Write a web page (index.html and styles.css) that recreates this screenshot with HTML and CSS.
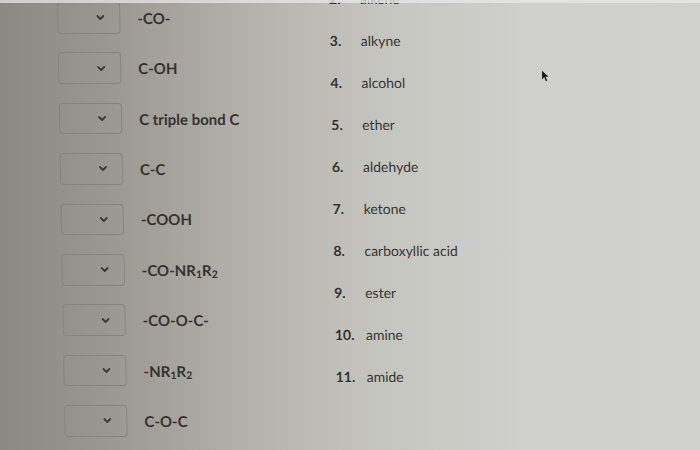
FILE: index.html
```html
<!DOCTYPE html>
<html lang="en">
<head>
<meta charset="utf-8">
<title>Functional groups</title>
<link rel="stylesheet" href="styles.css">
</head>
<body>
<div class="screen">
  <div class="sheet">
    <ul class="groups">
      <li class="group"><span class="select"><svg class="chev" viewBox="0 0 8 5"><polyline points="1,1 4,4 7,1"/></svg></span><span class="formula">-CO-</span></li>
      <li class="group"><span class="select"><svg class="chev" viewBox="0 0 8 5"><polyline points="1,1 4,4 7,1"/></svg></span><span class="formula">C-OH</span></li>
      <li class="group"><span class="select"><svg class="chev" viewBox="0 0 8 5"><polyline points="1,1 4,4 7,1"/></svg></span><span class="formula">C triple bond C</span></li>
      <li class="group"><span class="select"><svg class="chev" viewBox="0 0 8 5"><polyline points="1,1 4,4 7,1"/></svg></span><span class="formula">C-C</span></li>
      <li class="group"><span class="select"><svg class="chev" viewBox="0 0 8 5"><polyline points="1,1 4,4 7,1"/></svg></span><span class="formula">-COOH</span></li>
      <li class="group"><span class="select"><svg class="chev" viewBox="0 0 8 5"><polyline points="1,1 4,4 7,1"/></svg></span><span class="formula">-CO-NR<sub>1</sub>R<sub>2</sub></span></li>
      <li class="group"><span class="select"><svg class="chev" viewBox="0 0 8 5"><polyline points="1,1 4,4 7,1"/></svg></span><span class="formula">-CO-O-C-</span></li>
      <li class="group"><span class="select"><svg class="chev" viewBox="0 0 8 5"><polyline points="1,1 4,4 7,1"/></svg></span><span class="formula">-NR<sub>1</sub>R<sub>2</sub></span></li>
      <li class="group"><span class="select"><svg class="chev" viewBox="0 0 8 5"><polyline points="1,1 4,4 7,1"/></svg></span><span class="formula">C-O-C</span></li>
    </ul>
    <ol class="names">
      <li class="name"><span class="num">2.</span><span class="label">alkene</span></li>
      <li class="name"><span class="num">3.</span><span class="label">alkyne</span></li>
      <li class="name"><span class="num">4.</span><span class="label">alcohol</span></li>
      <li class="name"><span class="num">5.</span><span class="label">ether</span></li>
      <li class="name"><span class="num">6.</span><span class="label">aldehyde</span></li>
      <li class="name"><span class="num">7.</span><span class="label">ketone</span></li>
      <li class="name"><span class="num">8.</span><span class="label">carboxyllic acid</span></li>
      <li class="name"><span class="num">9.</span><span class="label">ester</span></li>
      <li class="name"><span class="num">10.</span><span class="label">amine</span></li>
      <li class="name"><span class="num">11.</span><span class="label">amide</span></li>
    </ol>
  </div>
  <svg class="cursor" viewBox="0 0 10 14"><path d="M1 1 L1 11 L3.5 8.5 L5.5 13 L7 12.3 L5 8 L8.5 8 Z"/></svg>
</div>
</body>
</html>
```

FILE: styles.css
```css
html, body {
  margin: 0;
  padding: 0;
}

body {
  width: 700px;
  height: 450px;
  overflow: hidden;
  font-family: Lato, "Open Sans", sans-serif;
  color: #2e2e2d;
}

.screen {
  position: relative;
  width: 700px;
  height: 450px;
  overflow: hidden;
  background:
    linear-gradient(90deg, #8c8882 0%, #9a9790 15%, #b3b1aa 35%, #c6c6c0 55%, #cfd0cb 75%, #d1d2ce 100%);
}

/* pale strip along the top edge of the display */
.screen::before {
  content: "";
  position: absolute;
  left: 0;
  top: 0;
  right: 0;
  height: 3px;
  background: rgba(232, 232, 229, 0.75);
  z-index: 1;
}

.sheet {
  display: flex;
  align-items: flex-start;
  transform: skewX(1deg);
  transform-origin: 0 0;
}

.groups {
  list-style: none;
  margin: 0;
  padding: 2px 0 0 57px;
  width: 272px;
  display: flex;
  flex-direction: column;
  gap: 18.8px;
}

.group {
  display: flex;
  align-items: center;
  height: 31.6px;
}

.select {
  box-sizing: border-box;
  width: 63px;
  height: 31.6px;
  border: 1.5px solid #858580;
  border-radius: 4px;
  display: flex;
  align-items: center;
  justify-content: flex-end;
  padding-right: 15px;
  flex-shrink: 0;
}

.chev {
  width: 8px;
  height: 5px;
  fill: none;
  stroke: #3a3a38;
  stroke-width: 1.8;
  stroke-linecap: round;
  stroke-linejoin: round;
}

.formula {
  margin-left: 17px;
  font-size: 15px;
  font-weight: 700;
  color: #333331;
  white-space: nowrap;
}

.formula sub {
  font-size: 10.5px;
  vertical-align: -2px;
  line-height: 0;
}

.names {
  list-style: none;
  margin: 0;
  padding: 0;
  margin-top: -23px;
  display: flex;
  flex-direction: column;
}

.name {
  display: flex;
  align-items: center;
  height: 42px;
  font-size: 14px;
}

.num {
  width: 31px;
  font-weight: 700;
  color: #333331;
}

.label {
  color: #363634;
}

.cursor {
  position: absolute;
  left: 541px;
  top: 70px;
  width: 9px;
  height: 12px;
  fill: #1c1c1c;
}
```
